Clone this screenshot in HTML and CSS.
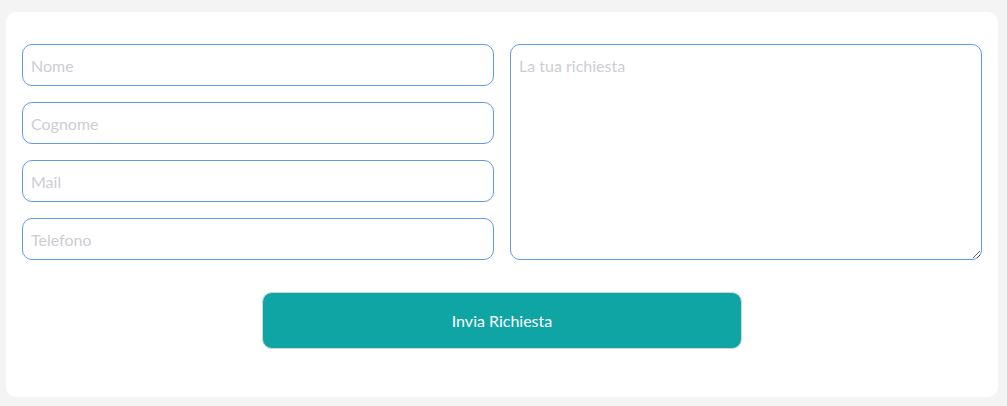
FILE: index.html
```html
<!DOCTYPE html>
<html lang="it">
<head>
  <meta charset="UTF-8" />
  <meta name="viewport" content="width=device-width, initial-scale=1.0"/>
  <title>Contatti</title>
  <link rel="stylesheet" href="styles.css">
</head>
<body>
  <div class="card">
    <form class="contact-form">
      <div class="fields">
        <div class="left-col">
          <input type="text" placeholder="Nome" />
          <input type="text" placeholder="Cognome" />
          <input type="email" placeholder="Mail" />
          <input type="tel" placeholder="Telefono" />
        </div>
        <textarea placeholder="La tua richiesta"></textarea>
      </div>
      <button type="submit" class="send-btn">Invia Richiesta</button>
    </form>
  </div>
</body>
</html>
```

FILE: styles.css
```css
html, body {
  margin: 0;
  background: #f4f4f4;
  font-family: Lato, "Open Sans", sans-serif;
}

body {
  padding: 12px 9px 9px 6px;
}

.card {
  background: #fff;
  border-radius: 10px;
  padding: 32px 16px 48px;
}

.fields {
  display: grid;
  grid-template-columns: 1fr 1fr;
  gap: 16px;
}

.left-col {
  display: flex;
  flex-direction: column;
  gap: 16px;
}

input, textarea {
  box-sizing: border-box;
  width: 100%;
  margin: 0;
  border: 1px solid #5d9cec;
  border-radius: 10px;
  font-family: Lato, sans-serif;
  font-size: 16px;
  color: #333;
  outline: none;
  background: #fff;
}

input {
  height: 42px;
  padding: 0 8px;
}

textarea {
  height: 216px;
  padding: 11px 8px;
  resize: vertical;
}

::placeholder {
  color: #cdcdd3;
}

.send-btn {
  display: block;
  box-sizing: border-box;
  width: 480px;
  height: 57px;
  margin: 32px auto 0;
  background-color: #0fa5a5;
  border: 1px solid #c8d8dc;
  border-radius: 10px;
  color: #fff;
  font-family: Lato, sans-serif;
  font-size: 16px;
  cursor: pointer;
}
```
